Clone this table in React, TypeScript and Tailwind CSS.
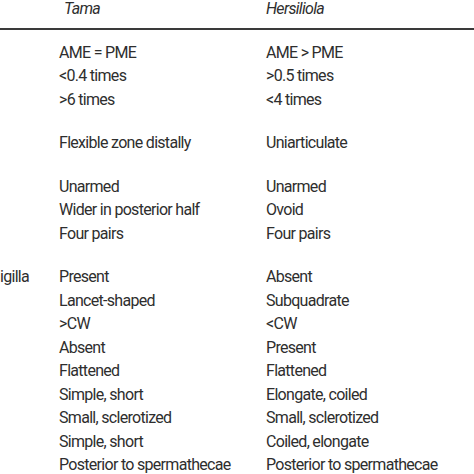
const ROWS: [string, string, string][] = [
  ['', 'AME = PME', 'AME > PME'],
  ['', '<0.4 times', '>0.5 times'],
  ['', '>6 times', '<4 times'],
  ['gap', '', ''],
  ['', 'Flexible zone distally', 'Uniarticulate'],
  ['gap', '', ''],
  ['', 'Unarmed', 'Unarmed'],
  ['', 'Wider in posterior half', 'Ovoid'],
  ['', 'Four pairs', 'Four pairs'],
  ['gap', '', ''],
  ['igilla', 'Present', 'Absent'],
  ['', 'Lancet-shaped', 'Subquadrate'],
  ['', '>CW', '<CW'],
  ['', 'Absent', 'Present'],
  ['', 'Flattened', 'Flattened'],
  ['', 'Simple, short', 'Elongate, coiled'],
  ['', 'Small, sclerotized', 'Small, sclerotized'],
  ['', 'Simple, short', 'Coiled, elongate'],
  ['', 'Posterior to spermathecae', 'Posterior to spermathecae'],
]

export default function App() {
  return (
    <div
      className="w-[474px] h-[474px] overflow-hidden bg-white text-[#2e2e2e] text-[16px] tracking-[-0.7px]"
      style={{ fontFamily: 'Roboto, "Liberation Sans", sans-serif' }}
    >
      <div className="flex h-[28px] items-end pb-[11px] italic leading-none">
        <div className="w-[64px]" />
        <div className="w-[202px]">Tama</div>
        <div>Hersiliola</div>
      </div>
      <div className="h-[2px] bg-[#3a3a3a]" />
      <div className="pt-[11px]">
        {ROWS.map(([label, a, b], i) =>
          label === 'gap' ? (
            <div key={i} className="h-[20px]" />
          ) : (
            <div key={i} className="flex h-[23.5px] items-center leading-none">
              <div className="w-[59px] shrink-0">{label}</div>
              <div className="w-[207px] shrink-0">{a}</div>
              <div>{b}</div>
            </div>
          )
        )}
      </div>
    </div>
  )
}
